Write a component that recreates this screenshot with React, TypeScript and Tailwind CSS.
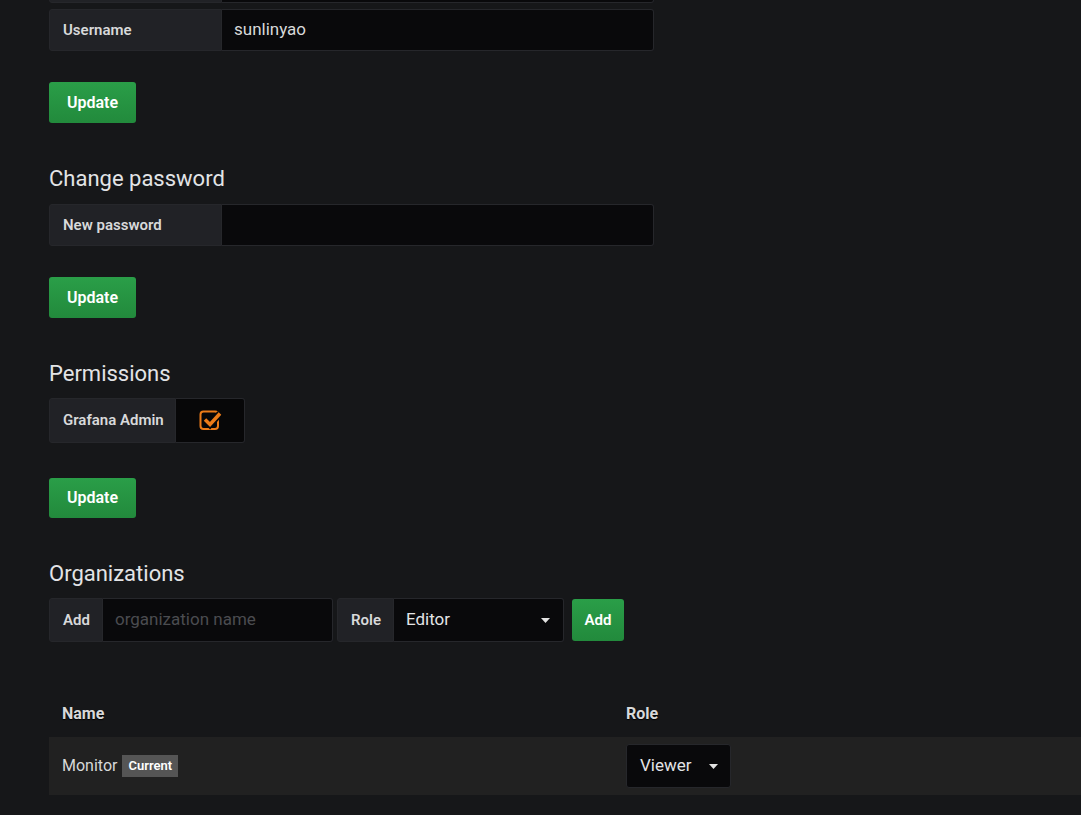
import React from "react";

const label =
  "flex shrink-0 items-center whitespace-nowrap rounded-l-[3px] border border-[#26272b] bg-[#212226] pl-[13px] text-[15px] font-semibold text-[#d8d9da]";
const inputBox =
  "flex items-center rounded-r-[3px] border border-l-0 border-[#26272b] bg-[#09090b] px-[12px] text-[17px]";
const greenBtn =
  "rounded-[3px] bg-gradient-to-b from-[#2a9e48] to-[#228a3c] px-[17px] text-[16px] font-semibold text-white";

function Caret() {
  return (
    <svg width="9" height="5" viewBox="0 0 9 5" className="shrink-0">
      <path d="M0 0 H9 L4.5 5 Z" fill="#e3e3e3" />
    </svg>
  );
}

function FormRow({ name, value }: { name?: string; value?: string }) {
  return (
    <div className="flex h-[42px] w-[605px]">
      <div className={`${label} w-[173px]`}>{name}</div>
      <div className={`${inputBox} flex-1 text-[#d8d9da]`}>{value}</div>
    </div>
  );
}

function UpdateButton({ className = "" }: { className?: string }) {
  return <button className={`${greenBtn} w-[87px] ${className}`}>Update</button>;
}

function Heading({ children, className = "mb-[10px]" }: { children: React.ReactNode; className?: string }) {
  return (
    <h3 className={`mt-[42px] text-[22px] font-normal leading-[28px] text-[#e3e4e6] ${className}`}>
      {children}
    </h3>
  );
}

export default function App() {
  return (
    <div className="flex min-h-screen flex-col items-start bg-[#161719] pl-[49px] font-['Roboto','Liberation_Sans',sans-serif] text-[#d8d9da]">
      {/* row above, scrolled out of view */}
      <div className="-mt-[39px]">
        <FormRow />
      </div>
      <div className="mt-[6px]">
        <FormRow name="Username" value="sunlinyao" />
      </div>
      <UpdateButton className="mt-[31px] h-[41px]" />

      <Heading className="mb-[11px]">Change password</Heading>
      <FormRow name="New password" />
      <UpdateButton className="mt-[31px] h-[41px]" />

      <Heading>Permissions</Heading>
      <div className="flex h-[45px]">
        <div className={`${label} w-[127px]`}>Grafana Admin</div>
        <div className="flex w-[69px] items-center justify-center rounded-r-[3px] border border-l-0 border-[#26272b] bg-[#070708]">
          <svg width="24" height="24" viewBox="0 0 24 24" className="-mt-[1px]">
            <rect x="2.5" y="3.5" width="17.5" height="17.5" rx="3" fill="none" stroke="#eb7b18" strokeWidth="2" />
            <path d="M7 11.5 L12 16.5 L22 5.5" fill="none" stroke="#070708" strokeWidth="7" />
            <path d="M7 11.5 L12 16.5 L22 5.5" fill="none" stroke="#eb7b18" strokeWidth="3.5" />
          </svg>
        </div>
      </div>
      <UpdateButton className="mt-[35px] h-[40px]" />

      <Heading>Organizations</Heading>
      <div className="flex h-[44px] items-stretch">
        <div className={`${label} w-[54px]`}>Add</div>
        <div className={`${inputBox} w-[230px] text-[#4b4c50]`}>organization name</div>
        <div className={`${label} ml-[4px] w-[57px]`}>Role</div>
        <div className={`${inputBox} w-[170px] justify-between pr-[13px] text-[#e3e4e6]`}>
          <span>Editor</span>
          <Caret />
        </div>
        <button className={`${greenBtn} my-[1px] ml-[8px] w-[52px] !px-0 !text-[15px]`}>Add</button>
      </div>

      <div className="mt-[49px] w-full">
        <div className="flex h-[46px] items-center text-[16px] font-bold text-[#d8d9da] [text-shadow:0_1px_1px_#000]">
          <div className="w-[577px] pl-[13px]">Name</div>
          <div>Role</div>
        </div>
        <div className="flex h-[58px] items-center bg-[#212121]">
          <div className="flex w-[577px] items-center pl-[13px] text-[16px]">
            Monitor
            <span className="ml-[5px] flex h-[22px] items-center bg-[#555555] px-[6px] text-[13px] font-semibold text-white">
              Current
            </span>
          </div>
          <div className="flex h-[44px] w-[105px] items-center justify-between rounded-[3px] border border-[#26272b] bg-[#09090b] pl-[13px] pr-[12px] text-[17px] text-[#e3e4e6]">
            <span>Viewer</span>
            <Caret />
          </div>
        </div>
      </div>
    </div>
  );
}
